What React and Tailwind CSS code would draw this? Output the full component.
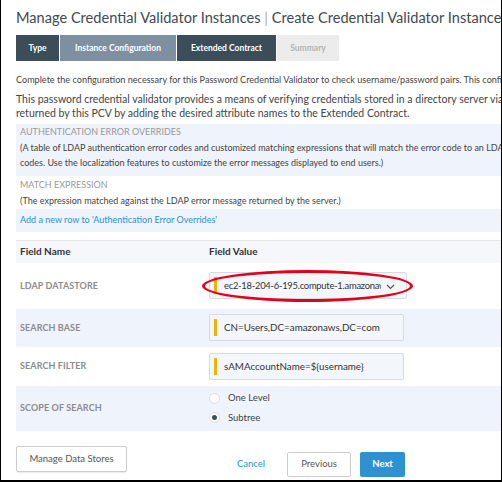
import React from "react";

const font = { fontFamily: "Lato, 'Open Sans', Arial, sans-serif" };

function Input({ children, select }) {
  return (
    <div className={`relative flex h-[27px] items-center rounded-[2px] border border-[#d6dbe1] bg-[#f3f7fc] pl-[4px] ${select ? "w-[198px]" : "w-[195px]"}`}>
      <div className="h-[17px] w-[3px] shrink-0 bg-[#f0b400]" />
      <span className={`ml-[7px] overflow-hidden whitespace-nowrap text-[#333] ${select ? "w-[157px] text-[9.4px] tracking-[-0.25px]" : "text-[9.8px]"}`}>{children}</span>
      {select && (
        <svg className="absolute right-[11px] top-[11px]" width="9" height="6" viewBox="0 0 9 6">
          <path d="M1 1l3.5 3.5L8 1" fill="none" stroke="#555" strokeWidth="1.2" />
        </svg>
      )}
    </div>
  );
}

function Row({ label, bg, h, children }) {
  return (
    <div className={`flex items-center ${bg}`} style={{ height: h }}>
      <div className="w-[193px] pl-[4px] text-[9px] font-bold uppercase tracking-[0.1px] text-[#8c8c8c]">{label}</div>
      <div>{children}</div>
    </div>
  );
}

export default function App() {
  return (
    <div className="h-[482px] w-[502px] overflow-hidden border-b-2 border-l border-r border-black bg-white" style={font}>
      <div className="w-[800px] pl-[15px]">
        <div className="pt-[8px] text-[14.6px] leading-[20px] text-[#3e4a54] whitespace-nowrap">
          Manage Credential Validator Instances <span className="text-[#aaa]">|</span> Create Credential Validator Instance
        </div>
        <div className="mt-[7px] flex h-[26px] text-[8.5px] font-bold">
          <div className="flex w-[43px] items-center justify-center bg-[#3b4d58] text-white">Type</div>
          <div className="ml-px flex w-[116px] items-center justify-center bg-[#7d90a1] text-white">Instance Configuration</div>
          <div className="ml-px flex w-[99px] items-center justify-center bg-[#3b4d58] text-white">Extended Contract</div>
          <div className="ml-px flex w-[62px] items-center justify-center bg-[#ececec] text-[#b4b4b4]">Summary</div>
        </div>
        <div className="mt-[12px] whitespace-nowrap text-[9.1px] text-[#444]">
          Complete the configuration necessary for this Password Credential Validator to check username/password pairs. This configuration is saved.
        </div>
        <div className="mt-[5px] whitespace-nowrap text-[10.5px] leading-[14px] text-[#444]">
          <div>This password credential validator provides a means of verifying credentials stored in a directory server via LDAP. Additional attributes can be</div>
          <div>returned by this PCV by adding the desired attribute names to the Extended Contract.</div>
        </div>
        <div className="mt-[4px] bg-[#eff3fb] pb-[6px] pl-[4px] pt-[2px]">
          <div className="whitespace-nowrap text-[9px] uppercase leading-[12px] text-[#999]">Authentication Error Overrides</div>
          <div className="mt-[2px] whitespace-nowrap text-[9px] leading-[15px] text-[#444]">
            <div>(A table of LDAP authentication error codes and customized matching expressions that will match the error code to an LDAP error message and</div>
            <div>codes. Use the localization features to customize the error messages displayed to end users.)</div>
          </div>
        </div>
        <div className="pb-[1px] pl-[4px] pt-[3px]">
          <div className="whitespace-nowrap text-[9px] uppercase leading-[12px] text-[#999]">Match Expression</div>
          <div className="mt-[2px] whitespace-nowrap text-[9px] leading-[15px] text-[#444]">(The expression matched against the LDAP error message returned by the server.)</div>
        </div>
        <div className="flex h-[23px] items-center bg-[#eff3fb] pl-[4px] text-[9px] text-[#2e8fd0]">
          Add a new row to 'Authentication Error Overrides'
        </div>
        <div className="mt-[8px] border-t border-[#e3e6ea]">
          <div className="flex h-[22px] items-center bg-[#f5f7fb] text-[10px] font-bold text-[#333]">
            <div className="w-[193px] pl-[4px]">Field Name</div>
            <div>Field Value</div>
          </div>
          <Row label="LDAP DATASTORE" bg="bg-white" h={46}>
            <div className="relative">
              <Input select>ec2-18-204-6-195.compute-1.amazonaws.com</Input>
              <div className="absolute left-[-7px] top-[-2px] h-[32px] w-[211px] rounded-[50%] border-[3px] border-[#e3001b]" />
            </div>
          </Row>
          <Row label="SEARCH BASE" bg="bg-[#eff3fb]" h={38}>
            <Input>CN=Users,DC=amazonaws,DC=com</Input>
          </Row>
          <Row label="SEARCH FILTER" bg="bg-white" h={39}>
            <Input>sAMAccountName=${"{username}"}</Input>
          </Row>
          <Row label="SCOPE OF SEARCH" bg="bg-[#eff3fb]" h={45}>
            <div className="flex flex-col gap-[5px] text-[9.5px] text-[#444]">
              <div className="flex items-center">
                <div className="h-[11px] w-[11px] rounded-full border border-[#ddd] bg-white" />
                <span className="ml-[8px]">One Level</span>
              </div>
              <div className="flex items-center">
                <div className="flex h-[11px] w-[11px] items-center justify-center rounded-full border border-[#ddd] bg-white">
                  <div className="h-[5px] w-[5px] rounded-full bg-[#3b4d58]" />
                </div>
                <span className="ml-[8px]">Subtree</span>
              </div>
            </div>
          </Row>
        </div>
        <div className="mt-[15px] flex items-start">
          <div className="flex h-[26px] w-[111px] items-center justify-center rounded-[2px] border border-[#ccc] bg-white text-[9.5px] text-[#555] shadow-[0_1px_1px_rgba(0,0,0,0.08)]">
            Manage Data Stores
          </div>
          <div className="ml-[110px] mt-[6px] flex items-center">
            <span className="text-[9.5px] text-[#2e8fd0]">Cancel</span>
            <div className="ml-[22px] flex h-[25px] w-[64px] items-center justify-center rounded-[2px] border border-[#ccc] bg-white text-[9.5px] text-[#555]">Previous</div>
            <div className="ml-[9px] flex h-[25px] w-[45px] items-center justify-center rounded-[2px] bg-[#2d92cf] text-[9.5px] font-bold text-white">Next</div>
          </div>
        </div>
      </div>
    </div>
  );
}
